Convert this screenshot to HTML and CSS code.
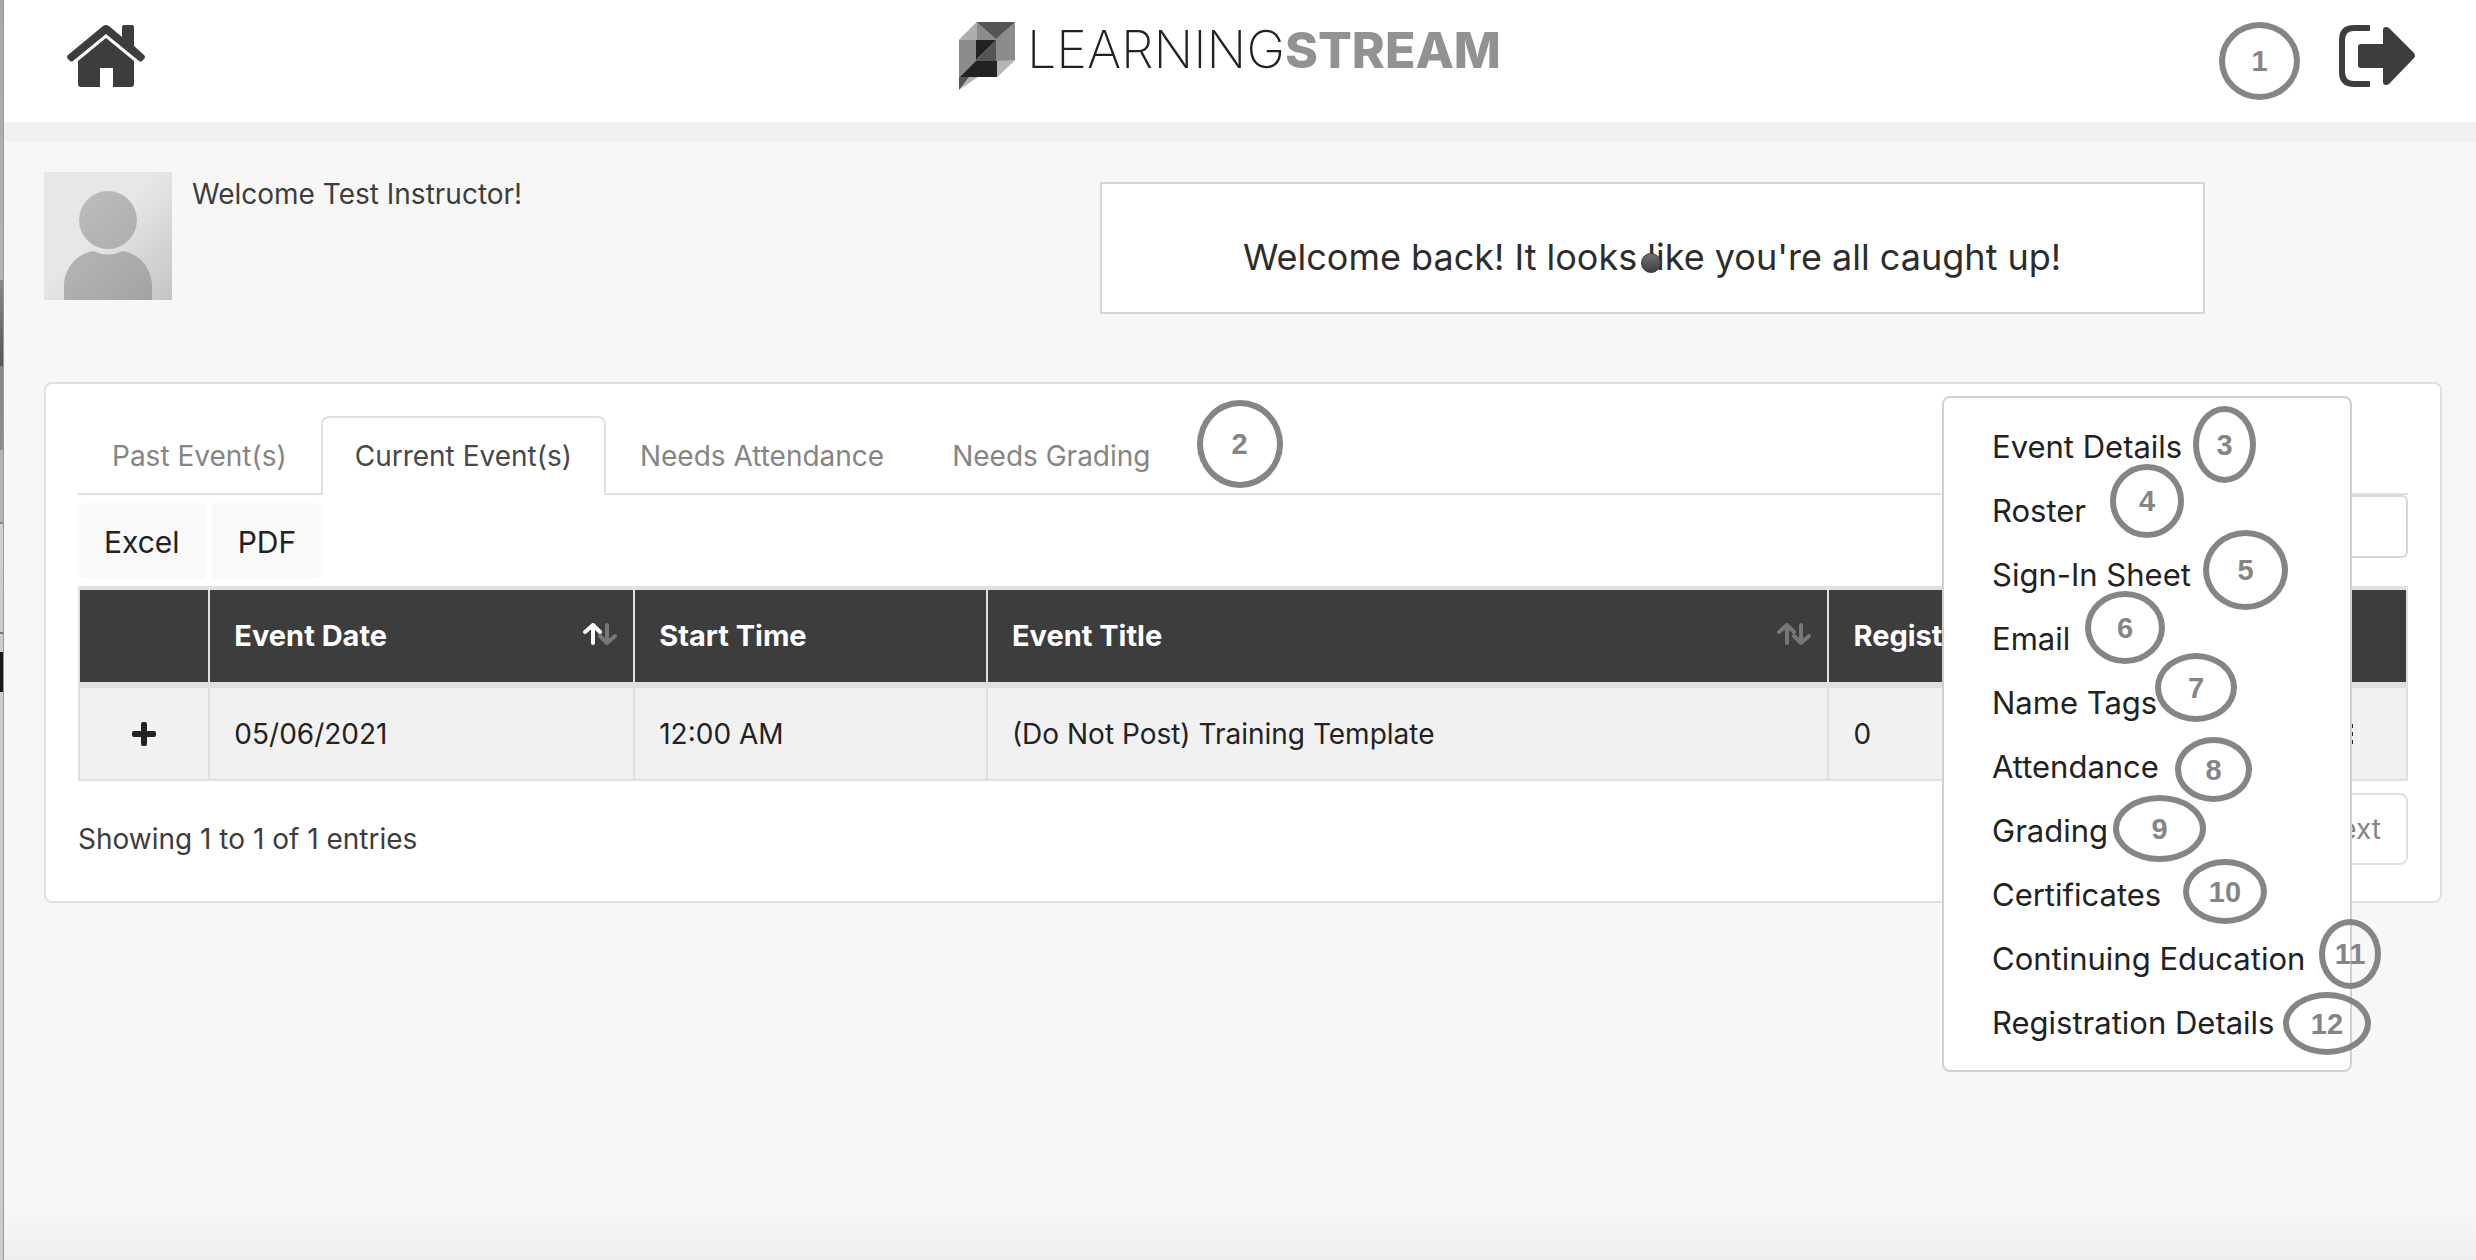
FILE: index.html
```html
<!DOCTYPE html>
<html lang="en">
<head>
  <meta charset="utf-8">
  <title>Instructor Dashboard</title>
  <link rel="stylesheet" href="styles.css">
</head>
<body>
<div class="edge"></div>
<div class="page">

  <header class="topbar">
    <a href="#" class="home" aria-label="Home">
      <svg width="78" height="62" viewBox="0 0 78 62">
        <path d="M36 1q3-2 6 0l13 11V2q0-2 2-2h8q2 0 2 2v19l10 9q2 2 0 4l-2 2q-1 1-3 0L39 9 6 36q-2 1-3 0l-2-2q-2-2 0-4z"/>
        <path d="M39 13l28 23v23q0 3-3 3H46V43H33v19H14q-3 0-3-3V36z"/>
      </svg>
    </a>
    <a href="#" class="logo">
      <svg width="56" height="68" viewBox="0 0 56 68">
        <path fill="#8c8c8c" d="M0 18L18 0h38v38L38 55H12L0 68z"/>
        <path fill="#adadad" d="M18 0L0 18h37z"/>
        <path fill="#8c8c8c" d="M18 0v18h19z"/>
        <path fill="#555" d="M18 0h38L37 17z"/>
        <path fill="#8c8c8c" d="M56 0v38l-19 1V17z"/>
        <path fill="#b5b5b5" d="M37 39l19-1-18 17z"/>
        <path fill="#222" d="M17 18h20L17 38z"/>
        <path fill="#555" d="M37 18v21H17z"/>
        <path fill="#222" d="M17 39h21v16H1z"/>
        <path fill="#555" d="M0 55h10L0 68z"/>
        <path fill="#b5b5b5" d="M10 55h9L0 68z"/>
      </svg>
      <span class="logo-text">LEARNING<b>STREAM</b></span>
    </a>
    <div class="topbar-right">
      <span class="mark mark-1">1</span>
      <a href="#" class="logout" aria-label="Log out">
        <svg width="76" height="62" viewBox="0 0 76 62">
          <path d="M30 0q1 0 1 1v4q0 1-1 1H15q-9 0-9 9v32q0 9 9 9h15q1 0 1 1v4q0 1-1 1H15Q0 62 0 47V15Q0 0 15 0z"/>
          <path d="M22 19h22V5q0-3 3-3 2 0 3 1l25 25q2 3 0 5L50 59q-1 1-3 1-3 0-3-3V43H22q-3 0-3-3V22q0-3 3-3z"/>
        </svg>
      </a>
    </div>
  </header>

  <main>
    <section class="intro">
      <div class="user">
        <svg class="avatar" width="128" height="128" viewBox="0 0 128 128">
          <defs>
            <linearGradient id="avatar-bg" x1="0" y1="0" x2="1" y2="1">
              <stop offset=".45" stop-color="#e7e7e7"/>
              <stop offset="1" stop-color="#c4c4c4"/>
            </linearGradient>
            <linearGradient id="avatar-fg" gradientUnits="userSpaceOnUse" x1="20" y1="20" x2="108" y2="128">
              <stop offset="0" stop-color="#bfbfbf"/>
              <stop offset="1" stop-color="#a3a3a3"/>
            </linearGradient>
          </defs>
          <rect width="128" height="128" fill="url(#avatar-bg)"/>
          <circle cx="64" cy="48" r="29" fill="url(#avatar-fg)"/>
          <path fill="url(#avatar-fg)" d="M20 128v-14c0-17 12-32 29-35q15 7 30 0c17 3 29 18 29 35v14z"/>
        </svg>
        <p>Welcome Test Instructor!</p>
      </div>
      <div class="message">
        <p>Welcome back! It looks like you're all caught up!</p>
        <span class="pointer"></span>
      </div>
    </section>

    <section class="card">
      <nav class="tabs">
        <a href="#past">Past Event(s)</a>
        <a href="#current" class="active">Current Event(s)</a>
        <a href="#attendance">Needs Attendance</a>
        <a href="#grading">Needs Grading</a>
        <span class="mark mark-2">2</span>
      </nav>

      <div class="toolbar">
        <div class="exports">
          <button type="button">Excel</button>
          <button type="button">PDF</button>
        </div>
        <input type="search" class="search" aria-label="Search">
      </div>

      <table class="events">
        <colgroup>
          <col class="col-expand"><col class="col-date"><col class="col-time">
          <col class="col-title"><col class="col-registered"><col class="col-menu">
        </colgroup>
        <thead>
          <tr>
            <th></th>
            <th><div class="sortable">Event Date
              <svg width="34" height="22" viewBox="0 0 34 22">
                <path class="dim" d="M24 2v18M17 13l7 7 8-7"/>
                <path class="lit" d="M10 20V2M2 9l8-7 7 7"/>
              </svg></div></th>
            <th>Start Time</th>
            <th><div class="sortable">Event Title
              <svg width="34" height="22" viewBox="0 0 34 22">
                <path class="dim" d="M24 2v18M17 13l7 7 8-7M10 20V2M2 9l8-7 7 7"/>
              </svg></div></th>
            <th>Registered</th>
            <th></th>
          </tr>
        </thead>
        <tbody>
          <tr>
            <td class="center">
              <svg width="24" height="24" viewBox="0 0 24 24"><path d="M9 2q0-2 2-2h2q2 0 2 2v7h7q2 0 2 2v2q0 2-2 2h-7v7q0 2-2 2h-2q-2 0-2-2v-7H2q-2 0-2-2v-2q0-2 2-2h7z"/></svg>
            </td>
            <td>05/06/2021</td>
            <td>12:00 AM</td>
            <td>(Do Not Post) Training Template</td>
            <td>0</td>
            <td class="center">
              <svg width="6" height="24" viewBox="0 0 6 24"><path d="M0 2h6v4H0zM0 10h6v4H0zM0 18h6v4H0z"/></svg>
            </td>
          </tr>
        </tbody>
      </table>

      <div class="table-footer">
        <p>Showing 1 to 1 of 1 entries</p>
        <button type="button" class="next">Next</button>
      </div>

      <ul class="menu">
        <li><a href="#">Event Details</a><span class="mark mark-3">3</span></li>
        <li><a href="#">Roster</a><span class="mark mark-4">4</span></li>
        <li><a href="#">Sign-In Sheet</a><span class="mark mark-5">5</span></li>
        <li><a href="#">Email</a><span class="mark mark-6">6</span></li>
        <li><a href="#">Name Tags</a><span class="mark mark-7">7</span></li>
        <li><a href="#">Attendance</a><span class="mark mark-8">8</span></li>
        <li><a href="#">Grading</a><span class="mark mark-9">9</span></li>
        <li><a href="#">Certificates</a><span class="mark mark-10">10</span></li>
        <li><a href="#">Continuing Education</a><span class="mark mark-11">11</span></li>
        <li><a href="#">Registration Details</a><span class="mark mark-12">12</span></li>
      </ul>
    </section>
  </main>
</div>
</body>
</html>
```
FILE: styles.css
```css
* {
  box-sizing: border-box;
}
body {
  margin: 0;
  display: flex;
  min-height: 100vh;
  font-family: Inter, "Liberation Sans", sans-serif;
  font-size: 28px;
  line-height: 42px;
  color: #3d3d3d;
  background: #f7f7f7;
}
p, ul {
  margin: 0;
  padding: 0;
}
a {
  color: inherit;
  text-decoration: none;
}
svg {
  display: block;
  fill: currentColor;
}
button, input {
  font: inherit;
  color: inherit;
}

/* strip of the window behind */
.edge {
  flex: none;
  width: 4px;
  border-right: 1px solid #999;
  background: linear-gradient(#a8a8a8 0, #b4b4b4 280px, #8a8a8a 280px, #555 366px,
    #888 366px, #8c8c8c 450px, #b4b4b4 450px, #b4b4b4 522px, #888 522px, #888 524px,
    #d0d0d0 524px, #ccc 632px, #777 632px, #777 634px, #ccc 634px, #ccc 652px,
    #1a1814 652px, #1a1814 692px, #ccc 692px);
}
.page {
  flex: 1;
  min-width: 0;
  background: linear-gradient(#f7f7f7, #eee) bottom / 100% 52px no-repeat;
}

.topbar {
  display: grid;
  grid-template-columns: 1fr auto 1fr;
  align-items: start;
  height: 142px;
  padding: 22px 61px 0 63px;
  background: #fff;
  border-bottom: 20px solid #f1f1f1;
}
.home {
  padding-top: 3px;
}
.logo {
  display: flex;
  gap: 12px;
  margin-right: 22px;
}
.logo-text {
  font-weight: 200;
  font-size: 52px;
  line-height: 56px;
  color: #222;
}
.logo-text b {
  font-weight: 800;
  font-size: 50px;
  color: #929292;
}
.topbar-right {
  display: flex;
  justify-content: flex-end;
  gap: 39px;
}
.logout {
  padding-top: 3px;
}

/* numbered callouts */
.mark {
  display: flex;
  align-items: center;
  justify-content: center;
  border: 6px solid #858585;
  border-radius: 50%;
  font-family: "Liberation Sans", sans-serif;
  font-weight: bold;
  font-size: 29px;
  line-height: 30px;
  color: #858585;
}
.mark-1 { width: 81px; height: 78px; }
.mark-2 { width: 86px; height: 88px; margin: -16px 0 0 12px; }
.menu .mark { position: absolute; }
.mark-3 { left: 249px; top: -9px; width: 63px; height: 77px; }
.mark-4 { left: 166px; top: -15px; width: 74px; height: 74px; }
.mark-5 { left: 259px; top: -13px; width: 85px; height: 80px; }
.mark-6 { left: 141px; top: -16px; width: 80px; height: 73px; }
.mark-7 { left: 211px; top: -18px; width: 82px; height: 69px; }
.mark-8 { left: 231px; top: 2px; width: 77px; height: 65px; }
.mark-9 { left: 169px; top: -4px; width: 93px; height: 67px; }
.mark-10 { left: 239px; top: -4px; width: 84px; height: 65px; }
.mark-11 { left: 375px; top: -8px; width: 62px; height: 70px; }
.mark-12 { left: 339px; top: 1px; width: 88px; height: 63px; }

main {
  padding: 30px 34px 80px 40px;
}
.intro {
  display: grid;
  grid-template-columns: 449fr 470fr 101fr;
  min-height: 210px;
}
.user {
  display: flex;
  align-items: flex-start;
  gap: 20px;
}
.user p {
  padding-top: 1px;
}
.message {
  position: relative;
  align-self: start;
  margin-top: 10px;
  padding: 50px 20px 32px;
  border: 2px solid #d6d6d6;
  background: #fff;
  font-size: 36px;
  line-height: 46px;
  text-align: center;
  color: #2d2d2d;
}
/* pointer of a shared screen, over the message */
.pointer {
  position: absolute;
  left: 49%;
  top: 69px;
  width: 20px;
  height: 20px;
  border: 1px solid #333;
  border-radius: 50%;
  background: linear-gradient(#707070, #404040);
}

.card {
  position: relative;
  padding: 32px 32px 36px;
  border: 2px solid #e0e0e0;
  border-radius: 8px;
  background: #fff;
}
.tabs {
  display: flex;
  height: 79px;
  border-bottom: 2px solid #e0e0e0;
  color: #858585;
}
.tabs a {
  height: 79px;
  padding: 17px 32px 16px;
  border: 2px solid transparent;
  border-bottom: 0;
  border-radius: 8px 8px 0 0;
}
.tabs .active {
  border-color: #e0e0e0;
  background: #fff;
  color: #484848;
}

.toolbar {
  display: flex;
  justify-content: space-between;
  align-items: flex-start;
  height: 91px;
}
.exports {
  display: flex;
  gap: 6px;
  padding-top: 8px;
}
.exports button {
  height: 76px;
  padding: 1px 26px 0;
  border: 0;
  background: #f9f9f9;
  font-size: 30px;
  color: #222;
}
.exports button:first-child {
  border-radius: 8px 0 0 8px;
}
.exports button:last-child {
  border-radius: 0 8px 8px 0;
}
.search {
  width: 338px;
  height: 63px;
  border: 2px solid #d6d6d6;
  border-radius: 6px;
  background: #fff;
}

.events {
  width: 100%;
  table-layout: fixed;
  border-spacing: 0;
  border-right: 2px solid #e0e0e0;
  color: #222;
}
.col-expand { width: 5.6%; }
.col-date { width: 18.25%; }
.col-time { width: 15.15%; }
.col-title { width: 36.15%; }
.col-registered { width: 19.95%; }
.events th, .events td {
  height: 93px;
  padding: 0 24px;
  border-left: 2px solid #e0e0e0;
  border-bottom: 2px solid #e0e0e0;
  text-align: left;
}
.events th {
  height: 102px;
  border-top: 4px solid #e0e0e0;
  border-bottom-width: 6px;
  background: #3d3d3d;
  font-size: 29px;
  color: #fff;
}
.events td {
  background: #f1f1f1;
}
.sortable {
  display: flex;
  justify-content: space-between;
  align-items: center;
  margin-right: -8px;
}
.sortable svg {
  margin-bottom: 4px;
}
.sortable path {
  fill: none;
  stroke-width: 4;
  stroke-linecap: round;
  stroke-linejoin: round;
}
.sortable .dim { stroke: #777; }
.sortable .lit { stroke: #fff; }
.center svg {
  margin: 0 auto;
}

.table-footer {
  display: flex;
  justify-content: space-between;
  padding-top: 12px;
}
.table-footer p {
  padding-top: 25px;
}
.next {
  height: 72px;
  padding: 0 25px;
  border: 2px solid #e0e0e0;
  border-radius: 0 8px 8px 0;
  background: #fff;
  color: #868686;
}

.menu {
  position: absolute;
  top: 12px;
  right: 88px;
  width: 410px;
  padding: 17px 0 15px;
  border: 2px solid #d0d0d0;
  border-radius: 8px;
  background: #fff;
  font-size: 31px;
  line-height: 48px;
  list-style: none;
  color: #222;
}
.menu li {
  position: relative;
  padding: 8px 0 8px 48px;
}
```
